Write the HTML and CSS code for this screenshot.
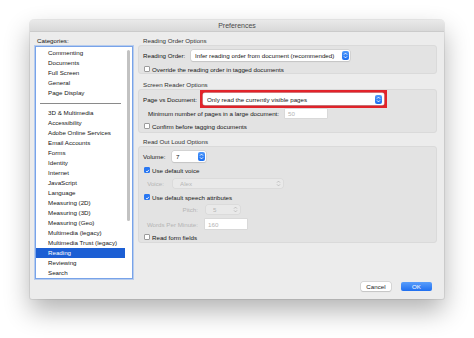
FILE: index.html
```html
<!DOCTYPE html>
<html>
<head>
<meta charset="utf-8">
<link rel="stylesheet" href="styles.css">
</head>
<body>
<div class="window">
  <div class="titlebar">Preferences</div>
  <div class="content">
    <div class="left">
      <div class="cat-label">Categories:</div>
      <div class="listbox">
        <ul class="items">
          <li>Commenting</li>
          <li>Documents</li>
          <li>Full Screen</li>
          <li>General</li>
          <li>Page Display</li>
          <li class="sep"><span></span></li>
          <li>3D &amp; Multimedia</li>
          <li>Accessibility</li>
          <li>Adobe Online Services</li>
          <li>Email Accounts</li>
          <li>Forms</li>
          <li>Identity</li>
          <li>Internet</li>
          <li>JavaScript</li>
          <li>Language</li>
          <li>Measuring (2D)</li>
          <li>Measuring (3D)</li>
          <li>Measuring (Geo)</li>
          <li>Multimedia (legacy)</li>
          <li>Multimedia Trust (legacy)</li>
          <li class="selected">Reading</li>
          <li>Reviewing</li>
          <li>Search</li>
        </ul>
        <div class="scrollbar"><div class="thumb"></div></div>
      </div>
    </div>
    <div class="right">
      <div class="sec-title">Reading Order Options</div>
      <div class="sec-box box1">
        <div class="row h11">
          <span class="label w48">Reading Order:</span>
          <div class="select w159">
            <span class="val">Infer reading order from document (recommended)</span>
            <span class="arrow"><svg viewBox="0 0 7 9" width="7" height="9"><path d="M2 3.6 L3.5 2.1 L5 3.6 M2 5.4 L3.5 6.9 L5 5.4" fill="none" stroke="#fff" stroke-width="0.9"/></svg></span>
          </div>
        </div>
        <div class="row h8 mt4">
          <span class="check"></span><span>Override the reading order in tagged documents</span>
        </div>
      </div>

      <div class="sec-title mt7">Screen Reader Options</div>
      <div class="sec-box box2">
        <div class="row h18">
          <span class="label w57">Page vs Document:</span>
          <div class="redbox">
            <div class="select inner">
              <span class="val">Only read the currently visible pages</span>
              <span class="arrow"><svg viewBox="0 0 7 9" width="7" height="9"><path d="M2 3.6 L3.5 2.1 L5 3.6 M2 5.4 L3.5 6.9 L5 5.4" fill="none" stroke="#fff" stroke-width="0.9"/></svg></span>
            </div>
          </div>
        </div>
        <div class="row h9 mt1">
          <span class="label indent w137">Minimum number of pages in a large document:</span>
          <div class="input w42"><span class="dim">50</span></div>
        </div>
        <div class="row h8 mt4">
          <span class="check"></span><span>Confirm before tagging documents</span>
        </div>
      </div>

      <div class="sec-title mt5">Read Out Loud Options</div>
      <div class="sec-box box3">
        <div class="row h11">
          <span class="label w29">Volume:</span>
          <div class="select w34">
            <span class="val">7</span>
            <span class="arrow"><svg viewBox="0 0 7 9" width="7" height="9"><path d="M2 3.6 L3.5 2.1 L5 3.6 M2 5.4 L3.5 6.9 L5 5.4" fill="none" stroke="#fff" stroke-width="0.9"/></svg></span>
          </div>
        </div>
        <div class="row h8 mt4">
          <span class="check on"><svg viewBox="0 0 6 6" width="6" height="6"><path d="M1.3 3.1 L2.5 4.3 L4.7 1.6" fill="none" stroke="#fff" stroke-width="1"/></svg></span><span>Use default voice</span>
        </div>
        <div class="row h9 mt5">
          <span class="label right dim w21 mr9">Voice:</span>
          <div class="select disabled w110">
            <span class="val">Alex</span>
            <span class="darrow"><svg viewBox="0 0 7 9" width="7" height="9"><path d="M2 3.6 L3.5 2.1 L5 3.6 M2 5.4 L3.5 6.9 L5 5.4" fill="none" stroke="#b9b9b9" stroke-width="0.9"/></svg></span>
          </div>
        </div>
        <div class="row h8 mt5">
          <span class="check on"><svg viewBox="0 0 6 6" width="6" height="6"><path d="M1.3 3.1 L2.5 4.3 L4.7 1.6" fill="none" stroke="#fff" stroke-width="1"/></svg></span><span>Use default speech attributes</span>
        </div>
        <div class="row h9 mt4">
          <span class="label right dim w55 mr8">Pitch:</span>
          <div class="select disabled w34">
            <span class="val">5</span>
            <span class="darrow"><svg viewBox="0 0 7 9" width="7" height="9"><path d="M2 3.6 L3.5 2.1 L5 3.6 M2 5.4 L3.5 6.9 L5 5.4" fill="none" stroke="#b9b9b9" stroke-width="0.9"/></svg></span>
          </div>
        </div>
        <div class="row h10 mt5">
          <span class="label right dim w55 mr7">Words Per Minute:</span>
          <div class="input w42"><span class="dim">160</span></div>
        </div>
        <div class="row h8 mt4">
          <span class="check"></span><span>Read form fields</span>
        </div>
      </div>

      <div class="buttons">
        <div class="btn cancel">Cancel</div>
        <div class="btn ok">OK</div>
      </div>
    </div>
  </div>
</div>
</body>
</html>
```

FILE: styles.css
```css
html, body {
  margin: 0;
  padding: 0;
  background: #ffffff;
}
body {
  font-family: "Liberation Sans", Arial, sans-serif;
  font-size: 6.2px;
  color: #151515;
  width: 474px;
  height: 338px;
  overflow: hidden;
}
.window {
  margin: 20px 0 0 30px;
  width: 414px;
  height: 279px;
  background: #ececec;
  border-radius: 4px 4px 2px 2px;
  box-shadow: 0 12px 26px rgba(0,0,0,0.3), 0 0 0 1px rgba(0,0,0,0.07);
  overflow: hidden;
  display: flex;
  flex-direction: column;
}
.titlebar {
  height: 11px;
  line-height: 11px;
  text-align: center;
  font-size: 7px;
  color: #4a4a4a;
  background: linear-gradient(#e9e9e9, #d9d9d9);
  border-bottom: 1px solid #cbcbcb;
  flex: none;
}
.content {
  flex: 1;
  display: flex;
  gap: 5px;
  padding: 5px 7px 0 5px;
  min-height: 0;
}
.left {
  width: 98px;
  flex: none;
  display: flex;
  flex-direction: column;
}
.cat-label {
  height: 8px;
  line-height: 8px;
  padding-left: 2px;
}
.listbox {
  margin-top: 1px;
  height: 233px;
  box-sizing: border-box;
  border: 1px solid #78a3e9;
  box-shadow: 0 0 0 1px rgba(140,178,238,0.55);
  background: #fff;
  display: flex;
  padding-top: 1px;
  overflow: hidden;
}
.items {
  list-style: none;
  margin: 0;
  padding: 0;
  width: 89px;
  flex: none;
}
.items li {
  height: 10px;
  line-height: 10px;
  padding-left: 12px;
  white-space: nowrap;
}
.items li.selected {
  background: #1c5fd4;
  color: #fff;
}
.items li.sep {
  display: flex;
  align-items: center;
  padding: 0 4px;
}
.items li.sep span {
  display: block;
  height: 1px;
  width: 82px;
  background: #8a8a8a;
}
.scrollbar {
  flex: 1;
  padding: 2px 0 0 2px;
}
.thumb {
  width: 3px;
  height: 171px;
  border-radius: 2px;
  background: #c2c2c2;
}
.right {
  width: 299px;
  flex: none;
  display: flex;
  flex-direction: column;
}
.sec-title {
  height: 8px;
  line-height: 8px;
  padding-left: 5px;
  color: #333;
}
.mt7 { margin-top: 7px; }
.mt5 { margin-top: 5px; }
.mt4 { margin-top: 4px; }
.mt1 { margin-top: 1px; }
.sec-box {
  background: #e3e3e3;
  border: 1px solid #dadada;
  border-radius: 3px;
  padding: 0 4px;
}
.box1 { padding-top: 4px; padding-bottom: 0; }
.box2 { padding-top: 0; padding-bottom: 2px; }
.box3 { padding-top: 4px; padding-bottom: 1px; }
.row {
  display: flex;
  align-items: center;
  white-space: nowrap;
}
.h8 { height: 8px; }
.h9 { height: 9px; }
.h10 { height: 10px; }
.h11 { height: 11px; }
.h18 { height: 18px; }
.label { flex: none; }
.right .label.right { text-align: right; }
.w21 { width: 21px; }
.w29 { width: 29px; }
.w48 { width: 48px; }
.w55 { width: 55px; }
.w57 { width: 57px; }
.w137 { width: 137px; }
.mr7 { margin-right: 7px; }
.mr8 { margin-right: 8px; }
.mr9 { margin-right: 9px; }
.indent { margin-left: 5px; }
.dim { color: #b4b4b4; }
.select {
  box-sizing: border-box;
  height: 100%;
  background: #fff;
  border-radius: 2px;
  box-shadow: 0 0 0 0.5px #c4c4c4, 0 1px 1px rgba(0,0,0,0.12);
  display: flex;
  align-items: center;
  padding: 0 1px 0 4px;
  flex: none;
}
.w159 { width: 159px; }
.w34 { width: 34px; }
.w110 { width: 110px; }
.w42 { width: 42px; }
.select .val {
  flex: 1;
  overflow: hidden;
}
.arrow {
  width: 7px;
  height: 9px;
  border-radius: 2px;
  background: linear-gradient(#4e98fb, #1c6ff0);
  display: flex;
}
.darrow {
  width: 7px;
  height: 9px;
  display: flex;
}
.select.disabled {
  background: #e9e9e9;
  box-shadow: 0 0 0 0.5px #d4d4d4;
  color: #b6b6b6;
  padding-left: 7px;
}
.redbox {
  box-sizing: border-box;
  width: 187px;
  height: 18px;
  border: 3px solid #e2232a;
  flex: none;
  display: flex;
}
.select.inner {
  width: 100%;
  height: 12px;
  padding-left: 4px;
  padding-right: 2px;
}
.input {
  box-sizing: border-box;
  height: 100%;
  background: #fff;
  box-shadow: 0 0 0 0.5px #d0d0d0;
  display: flex;
  align-items: center;
  padding-left: 3px;
  flex: none;
}
.check {
  box-sizing: border-box;
  width: 6px;
  height: 6px;
  margin-left: 1px;
  margin-right: 2px;
  background: #fff;
  border: 0.5px solid #9c9c9c;
  border-radius: 1px;
  flex: none;
  display: flex;
}
.check.on {
  background: #2a78f2;
  border-color: #2a78f2;
}
.check.on svg {
  margin: -0.5px;
}
.buttons {
  margin-top: auto;
  margin-bottom: 8px;
  padding-right: 5px;
  display: flex;
  justify-content: flex-end;
  gap: 10px;
}
.btn {
  height: 9px;
  line-height: 9px;
  text-align: center;
  border-radius: 2px;
  box-sizing: border-box;
}
.cancel {
  width: 30px;
  background: #fff;
  box-shadow: 0 0 0 0.5px #c2c2c2, 0 1px 1px rgba(0,0,0,0.15);
  color: #222;
}
.ok {
  width: 31px;
  background: linear-gradient(#5a9efb, #1f6ff0);
  color: #fff;
}
```
